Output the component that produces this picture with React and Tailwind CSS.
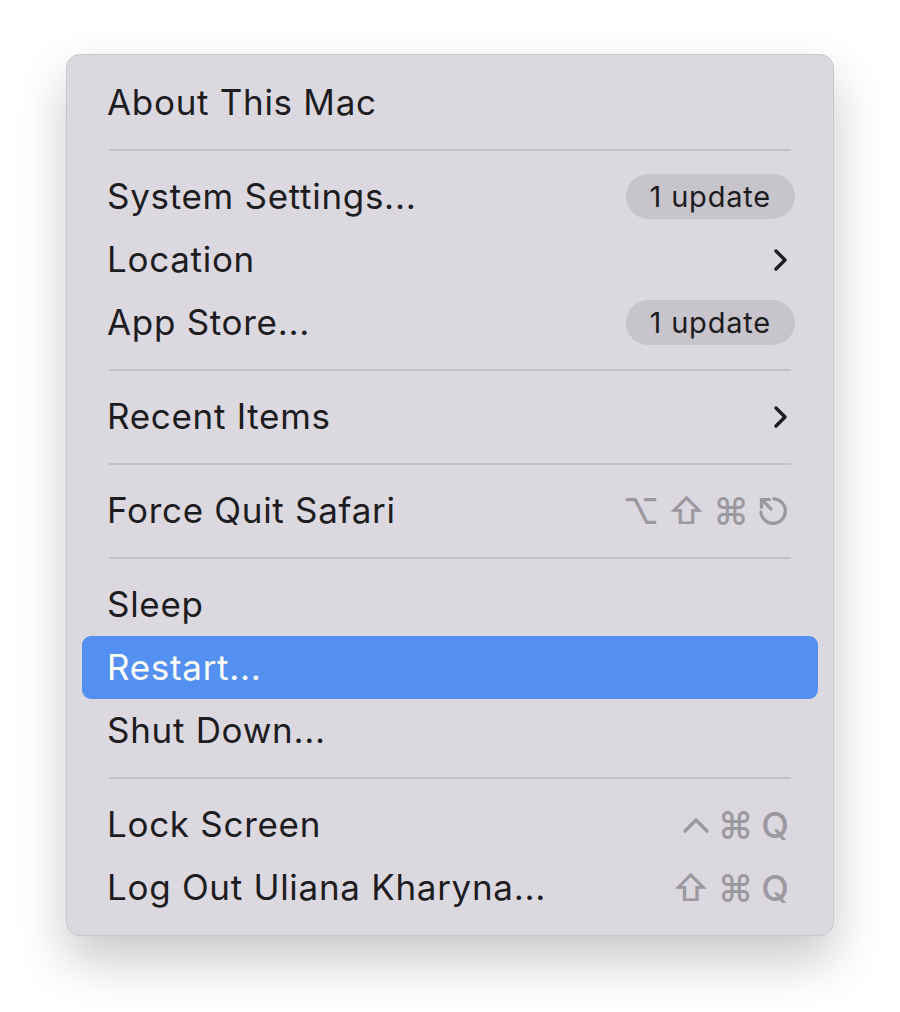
import React from 'react';

const font = { fontFamily: 'Inter, "Noto Sans", sans-serif' };

const Escape = () => (
    <svg width="32" height="32" viewBox="0 0 32 32" fill="none" stroke="currentColor" strokeWidth="3.2" strokeLinecap="round" strokeLinejoin="round">
        <path d="M4.5 4.5 L14 14" />
        <path d="M4.5 12.5 V4.5 H12.5" />
        <path d="M17 3.8 A12.3 12.3 0 1 1 3.8 17" />
    </svg>
);

const Caret = () => (
    <svg width="28" height="18" viewBox="0 0 28 18" fill="none" stroke="currentColor" strokeWidth="3.4" strokeLinecap="round" strokeLinejoin="round">
        <path d="M3 15 L14 4 L25 15" />
    </svg>
);

const Chevron = () => (
    <svg width="18" height="26" viewBox="0 0 18 26" fill="none" stroke="#1d1c1f" strokeWidth="3.4" strokeLinecap="round" strokeLinejoin="round">
        <path d="M5 4 L14 13 L5 22" />
    </svg>
);

const Badge = ({ children }) => (
    <span className="h-[45px] mr-[-6px] px-[24px] rounded-full bg-[#c7c4cb] text-[#1d1c1f] text-[29px] tracking-[0.8px] flex items-center">
        {children}
    </span>
);

const Keys = ({ children }) => (
    <span className="flex items-center gap-[8px] text-[#9b999f] text-[36px] font-medium leading-none">{children}</span>
);

const Item = ({ label, right, active }) => (
    <div
        className={`h-[63px] mx-[15px] pl-[25px] pr-[29px] rounded-[9px] flex items-center justify-between ${
            active ? 'bg-[#5390f1] text-white' : 'text-[#1d1c1f]'
        }`}
    >
        <span className="text-[35px] tracking-[0.7px]">{label}</span>
        {right}
    </div>
);

const Separator = () => (
    <div className="h-[31px] flex items-center px-[42px]">
        <div className="h-[2px] w-full bg-[#c4c1c8]" />
    </div>
);

export default function App() {
    return (
        <div className="w-[900px] h-[1012px] bg-white pt-[54px] pl-[66px]" style={font}>
            <div className="w-[768px] py-[16px] rounded-[14px] bg-[#dbd8df] border border-[#c9c6cc] shadow-[0_24px_50px_rgba(0,0,0,0.22)]">
                <Item label="About This Mac" />
                <Separator />
                <Item label="System Settings..." right={<Badge>1 update</Badge>} />
                <Item label="Location" right={<Chevron />} />
                <Item label="App Store..." right={<Badge>1 update</Badge>} />
                <Separator />
                <Item label="Recent Items" right={<Chevron />} />
                <Separator />
                <Item
                    label="Force Quit Safari"
                    right={
                        <Keys>
                            <span>⌥</span>
                            <span>⇧</span>
                            <span>⌘</span>
                            <Escape />
                        </Keys>
                    }
                />
                <Separator />
                <Item label="Sleep" />
                <Item label="Restart..." active />
                <Item label="Shut Down..." />
                <Separator />
                <Item
                    label="Lock Screen"
                    right={
                        <Keys>
                            <Caret />
                            <span>⌘</span>
                            <span>Q</span>
                        </Keys>
                    }
                />
                <Item
                    label="Log Out Uliana Kharyna..."
                    right={
                        <Keys>
                            <span>⇧</span>
                            <span>⌘</span>
                            <span>Q</span>
                        </Keys>
                    }
                />
            </div>
        </div>
    );
}
